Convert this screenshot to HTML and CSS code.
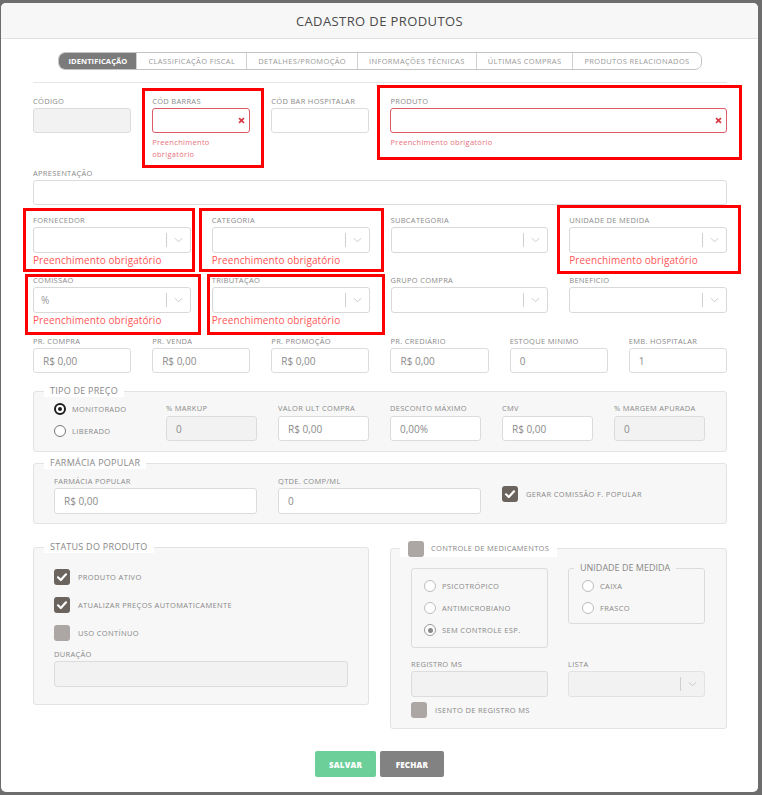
FILE: index.html
```html
<!DOCTYPE html>
<html lang="pt-BR">
<head>
<meta charset="utf-8">
<title>Cadastro de Produtos</title>
<link rel="stylesheet" href="styles.css">
</head>
<body>
<div class="modal">
  <header class="modal-header"><h1 class="title">CADASTRO DE PRODUTOS</h1></header>
  <main class="modal-body">
    <nav class="tabs">
      <span class="tab active">IDENTIFICAÇÃO</span>
      <span class="tab">CLASSIFICAÇÃO FISCAL</span>
      <span class="tab">DETALHES/PROMOÇÃO</span>
      <span class="tab">INFORMAÇÕES TÉCNICAS</span>
      <span class="tab">ÚLTIMAS COMPRAS</span>
      <span class="tab">PRODUTOS RELACIONADOS</span>
    </nav>
    <div class="sep"></div>

    <div class="row grid6 r1">
      <div class="field"><label class="lbl">CÓDIGO</label><div class="input disabled"></div></div>
      <div class="field"><label class="lbl">CÓD BARRAS</label><div class="input invalid"><svg class="xicon" viewBox="0 0 8 8"><path d="M1.2 1.2L6.8 6.8M6.8 1.2L1.2 6.8"/></svg></div><div class="err-sm">Preenchimento obrigatório</div></div>
      <div class="field"><label class="lbl">CÓD BAR HOSPITALAR</label><div class="input"></div></div>
      <div class="field span3"><label class="lbl">PRODUTO</label><div class="input invalid"><svg class="xicon" viewBox="0 0 8 8"><path d="M1.2 1.2L6.8 6.8M6.8 1.2L1.2 6.8"/></svg></div><div class="err-sm">Preenchimento obrigatório</div></div>
    </div>

    <div class="row r2">
      <div class="field"><label class="lbl">APRESENTAÇÃO</label><div class="input"></div></div>
    </div>

    <div class="row grid4 r3">
      <div class="field"><label class="lbl">FORNECEDOR</label><div class="select"><span class="val"></span><span class="bar"></span><svg class="chev" viewBox="0 0 10 6"><path d="M1 1L5 5L9 1"/></svg></div><div class="err-lg">Preenchimento obrigatório</div></div>
      <div class="field"><label class="lbl">CATEGORIA</label><div class="select"><span class="val"></span><span class="bar"></span><svg class="chev" viewBox="0 0 10 6"><path d="M1 1L5 5L9 1"/></svg></div><div class="err-lg">Preenchimento obrigatório</div></div>
      <div class="field"><label class="lbl">SUBCATEGORIA</label><div class="select"><span class="val"></span><span class="bar"></span><svg class="chev" viewBox="0 0 10 6"><path d="M1 1L5 5L9 1"/></svg></div></div>
      <div class="field"><label class="lbl">UNIDADE DE MEDIDA</label><div class="select"><span class="val"></span><span class="bar"></span><svg class="chev" viewBox="0 0 10 6"><path d="M1 1L5 5L9 1"/></svg></div><div class="err-lg">Preenchimento obrigatório</div></div>
    </div>

    <div class="row grid4 r4">
      <div class="field"><label class="lbl">COMISSÃO</label><div class="select"><span class="val">%</span><span class="bar"></span><svg class="chev" viewBox="0 0 10 6"><path d="M1 1L5 5L9 1"/></svg></div><div class="err-lg">Preenchimento obrigatório</div></div>
      <div class="field"><label class="lbl">TRIBUTAÇÃO</label><div class="select"><span class="val"></span><span class="bar"></span><svg class="chev" viewBox="0 0 10 6"><path d="M1 1L5 5L9 1"/></svg></div><div class="err-lg">Preenchimento obrigatório</div></div>
      <div class="field"><label class="lbl">GRUPO COMPRA</label><div class="select"><span class="val"></span><span class="bar"></span><svg class="chev" viewBox="0 0 10 6"><path d="M1 1L5 5L9 1"/></svg></div></div>
      <div class="field"><label class="lbl">BENEFICIO</label><div class="select"><span class="val"></span><span class="bar"></span><svg class="chev" viewBox="0 0 10 6"><path d="M1 1L5 5L9 1"/></svg></div></div>
    </div>

    <div class="row grid6 r5">
      <div class="field"><label class="lbl">PR. COMPRA</label><div class="input">R$ 0,00</div></div>
      <div class="field"><label class="lbl">PR. VENDA</label><div class="input">R$ 0,00</div></div>
      <div class="field"><label class="lbl">PR. PROMOÇÃO</label><div class="input">R$ 0,00</div></div>
      <div class="field"><label class="lbl">PR. CREDIÁRIO</label><div class="input">R$ 0,00</div></div>
      <div class="field"><label class="lbl">ESTOQUE MINIMO</label><div class="input">0</div></div>
      <div class="field"><label class="lbl">EMB. HOSPITALAR</label><div class="input">1</div></div>
    </div>

    <fieldset class="group g-preco">
      <legend class="lgd">TIPO DE PREÇO</legend>
      <div class="gbody grid-in">
        <div class="radios">
          <div class="radio-item"><span class="radio on-dark"></span><span class="opt">MONITORADO</span></div>
          <div class="radio-item"><span class="radio dark"></span><span class="opt">LIBERADO</span></div>
        </div>
        <div class="field"><label class="lbl">% MARKUP</label><div class="input disabled">0</div></div>
        <div class="field"><label class="lbl">VALOR ULT COMPRA</label><div class="input">R$ 0,00</div></div>
        <div class="field"><label class="lbl">DESCONTO MÁXIMO</label><div class="input">0,00%</div></div>
        <div class="field"><label class="lbl">CMV</label><div class="input">R$ 0,00</div></div>
        <div class="field"><label class="lbl">% MARGEM APURADA</label><div class="input disabled">0</div></div>
      </div>
    </fieldset>

    <fieldset class="group g-farm">
      <legend class="lgd">FARMÁCIA POPULAR</legend>
      <div class="gbody grid-in">
        <div class="field span2"><label class="lbl">FARMÁCIA POPULAR</label><div class="input">R$ 0,00</div></div>
        <div class="field span2"><label class="lbl">QTDE. COMP/ML</label><div class="input">0</div></div>
        <div class="check-item farm-check span2"><span class="cbox on"><svg viewBox="0 0 16 16"><path d="M4 8.3L6.8 11L12 5.3"/></svg></span><span class="opt">GERAR COMISSÃO F. POPULAR</span></div>
      </div>
    </fieldset>

    <div class="bottom-row">
      <fieldset class="group g-status">
        <legend class="lgd">STATUS DO PRODUTO</legend>
        <div class="gbody status-body">
          <div class="check-item"><span class="cbox on"><svg viewBox="0 0 16 16"><path d="M4 8.3L6.8 11L12 5.3"/></svg></span><span class="opt">PRODUTO ATIVO</span></div>
          <div class="check-item"><span class="cbox on"><svg viewBox="0 0 16 16"><path d="M4 8.3L6.8 11L12 5.3"/></svg></span><span class="opt">ATUALIZAR PREÇOS AUTOMATICAMENTE</span></div>
          <div class="check-item"><span class="cbox"></span><span class="opt">USO CONTÍNUO</span></div>
          <div class="field duracao"><label class="lbl">DURAÇÃO</label><div class="input disabled tall"></div></div>
        </div>
      </fieldset>

      <fieldset class="group g-ctrl">
        <legend class="lgd lgd-check"><span class="cbox"></span><span>CONTROLE DE MEDICAMENTOS</span></legend>
        <div class="gbody ctrl-body">
          <div class="ctrl-top">
            <div class="sub sub-plain">
              <div class="radio-item"><span class="radio"></span><span class="opt">PSICOTRÓPICO</span></div>
              <div class="radio-item"><span class="radio"></span><span class="opt">ANTIMICROBIANO</span></div>
              <div class="radio-item"><span class="radio on"></span><span class="opt">SEM CONTROLE ESP.</span></div>
            </div>
            <fieldset class="sub sub-fs">
              <legend class="lgd-sub">UNIDADE DE MEDIDA</legend>
              <div class="sub-body">
                <div class="radio-item"><span class="radio"></span><span class="opt">CAIXA</span></div>
                <div class="radio-item"><span class="radio"></span><span class="opt">FRASCO</span></div>
              </div>
            </fieldset>
          </div>
          <div class="ctrl-mid">
            <div class="field"><label class="lbl">REGISTRO MS</label><div class="input disabled tall"></div></div>
            <div class="field"><label class="lbl">LISTA</label><div class="select disabled"><span class="val"></span><span class="bar"></span><svg class="chev" viewBox="0 0 10 6"><path d="M1 1L5 5L9 1"/></svg></div></div>
          </div>
          <div class="check-item isento"><span class="cbox"></span><span class="opt">ISENTO DE REGISTRO MS</span></div>
        </div>
      </fieldset>
    </div>
  </main>
  <footer class="modal-footer">
    <button class="btn btn-save" type="button">SALVAR</button>
    <button class="btn btn-close" type="button">FECHAR</button>
  </footer>
</div>

<div class="ann ann-barras"></div>
<div class="ann ann-produto"></div>
<div class="ann ann-fornecedor"></div>
<div class="ann ann-categoria"></div>
<div class="ann ann-unidade"></div>
<div class="ann ann-comissao"></div>
<div class="ann ann-tributacao"></div>
</body>
</html>
```
FILE: styles.css
```css
* { box-sizing: border-box; }
html { background: #6d6d6d; }
body {
  margin: 0;
  background: #6d6d6d;
  font-family: "Open Sans", "DejaVu Sans", sans-serif;
  color: #888;
  min-height: 795px;
}

.modal {
  margin: 3px 0 0 1px;
  width: 757px;
  background: #fff;
  border-radius: 5px;
  overflow: hidden;
}

.modal-header {
  height: 36px;
  background: #f7f7f7;
  border-bottom: 1px solid #e2e2e2;
  display: flex;
  align-items: center;
  justify-content: center;
}
.title {
  margin: 0;
  font-size: 13px;
  font-weight: 400;
  letter-spacing: 0.4px;
  color: #4a4a4a;
}

.modal-body {
  padding: 0 31px 0 32px;
}

/* tabs */
.tabs {
  margin: 13px auto 0;
  width: fit-content;
  display: flex;
  height: 18px;
  border: 1px solid #c4c4c4;
  border-radius: 7px;
  overflow: hidden;
}
.tab {
  display: flex;
  align-items: center;
  padding: 0 11px;
  font-size: 7.5px;
  letter-spacing: 0.35px;
  color: #999;
  border-left: 1px solid #d0d0d0;
  white-space: nowrap;
}
.tab:first-child { border-left: none; padding: 0 9px; letter-spacing: 0.1px; }
.tab.active {
  background: #7b7b7b;
  color: #fff;
  font-weight: 700;
}

.sep {
  margin-top: 12px;
  height: 1px;
  background: #e6e6e6;
}

/* rows */
.row { margin-top: 8px; }
.r1 { margin-top: 13px; }
.r3 { margin-top: 10px; }
.r5 { margin-top: 9px; }
.grid6 {
  display: grid;
  grid-template-columns: repeat(6, 1fr);
  column-gap: 21px;
  align-items: start;
}
.grid4 {
  display: grid;
  grid-template-columns: repeat(4, 1fr);
  column-gap: 21px;
  align-items: start;
}
.span2 { grid-column: span 2; }
.span3 { grid-column: span 3; }

.field { min-width: 0; }
.lbl {
  display: block;
  font-size: 7.5px;
  line-height: 10px;
  letter-spacing: 0.3px;
  color: #8a8a8a;
  margin-bottom: 2px;
  white-space: nowrap;
}

.input {
  height: 25px;
  border: 1px solid #dcdcdc;
  border-radius: 3px;
  background: #fff;
  display: flex;
  align-items: center;
  padding: 0 9px;
  font-size: 10px;
  color: #8a8a8a;
}
.input.tall { height: 26px; }
.input.disabled { background: #f2f2f2; }
.input.invalid {
  border-color: #dd5a67;
  justify-content: flex-end;
  padding-right: 4px;
}
.xicon {
  width: 7px;
  height: 7px;
  fill: none;
  stroke: #d93a48;
  stroke-width: 2;
}

.select {
  height: 26px;
  border: 1px solid #d9d9d9;
  border-radius: 3px;
  background: #fff;
  display: flex;
  align-items: center;
  font-size: 10px;
  color: #999;
}
.select.disabled { background: #f2f2f2; border-color: #e2e2e2; }
.select .val { flex: 1; padding-left: 7px; }
.select .bar { width: 1px; height: 14px; background: #cfcfcf; }
.chev {
  width: 9px;
  height: 6px;
  margin: 0 7px 0 7px;
  fill: none;
  stroke: #c4c4c4;
  stroke-width: 1;
}

.err-sm {
  margin-top: 3px;
  font-size: 7.5px;
  line-height: 12px;
  letter-spacing: 0.3px;
  color: #e8707c;
}
.err-lg {
  margin-top: 1px;
  font-size: 10px;
  line-height: 13px;
  letter-spacing: 0.1px;
  color: #ff5656;
  white-space: nowrap;
}

/* fieldsets */
.group {
  margin: 12px 0 0;
  padding: 0;
  border: 1px solid #e3e3e3;
  border-radius: 3px;
  background: #f7f7f7;
  min-width: 0;
}
.lgd {
  margin-left: 10px;
  padding: 0 6px;
  background: #fff;
  font-size: 9px;
  line-height: 12px;
  letter-spacing: 0.25px;
  color: #888;
}
.g-farm { margin-top: 5px; }

.grid-in {
  display: grid;
  grid-template-columns: repeat(6, 91px);
  column-gap: 21px;
  align-items: start;
}
.g-preco .gbody { padding: 6px 20px 10px 20px; }
.g-preco .field .lbl { margin-bottom: 3px; }
.g-farm .gbody { padding: 7px 20px 9px 20px; }
.g-farm .input { height: 26px; }

.radios {
  display: flex;
  flex-direction: column;
  gap: 10px;
}
.radio-item {
  display: flex;
  align-items: center;
  height: 12px;
}
.radio {
  width: 12px;
  height: 12px;
  border-radius: 50%;
  border: 1.5px solid #bdbdbd;
  background: #fff;
  margin-right: 6px;
  flex: none;
  display: flex;
  align-items: center;
  justify-content: center;
}
.radio.dark { border: 1.5px solid #777; }
.radio.on-dark { border: 2px solid #1e1e1e; }
.radio.on-dark::after {
  content: "";
  width: 4px;
  height: 4px;
  border-radius: 50%;
  background: #1e1e1e;
}
.radio.on { border-color: #9a9a9a; }
.radio.on::after {
  content: "";
  width: 5px;
  height: 5px;
  border-radius: 50%;
  background: #8a8a8a;
}
.opt {
  font-size: 7.5px;
  letter-spacing: 0.35px;
  color: #888;
  white-space: nowrap;
}

.check-item {
  display: flex;
  align-items: center;
  height: 16px;
}
.cbox {
  width: 16px;
  height: 16px;
  border-radius: 3px;
  background: #aca7a4;
  flex: none;
  margin-right: 8px;
  display: flex;
}
.cbox.on { background: #6b635d; }
.cbox svg {
  width: 16px;
  height: 16px;
  fill: none;
  stroke: #fff;
  stroke-width: 2.2;
  stroke-linecap: round;
  stroke-linejoin: round;
}
.farm-check { margin-top: 10px; }

/* bottom */
.bottom-row {
  margin-top: 16px;
  display: grid;
  grid-template-columns: 336px 1fr;
  column-gap: 21px;
  align-items: start;
}
.bottom-row .group { margin: 0; }
.g-status { margin-top: 1px !important; }
.status-body {
  padding: 16px 20px 17px 20px;
  display: flex;
  flex-direction: column;
  gap: 12px;
}
.duracao { margin-top: -4px; }

.lgd-check {
  display: flex;
  align-items: center;
  margin-left: 9px;
  padding: 0 8px 0 8px;
  line-height: 17px;
  height: 17px;
}
.lgd-check .cbox { margin-right: 7px; }
.lgd-check span:last-child {
  font-size: 7.5px;
  letter-spacing: 0.3px;
}

.ctrl-body { padding: 5px 20px 10px 20px; }
.ctrl-top {
  display: grid;
  grid-template-columns: 137px 137px;
  column-gap: 20px;
  align-items: start;
}
.sub {
  border: 1px solid #dcdcdc;
  border-radius: 3px;
  margin: 0;
  padding: 0;
  min-width: 0;
}
.sub-plain {
  margin-top: 6px;
  padding: 11px 12px 11px 12px;
  display: flex;
  flex-direction: column;
  gap: 10px;
}
.lgd-sub {
  margin-left: 5px;
  padding: 0 6px;
  font-size: 9px;
  line-height: 12px;
  color: #888;
}
.sub-body {
  padding: 6px 13px 9px 13px;
  display: flex;
  flex-direction: column;
  gap: 10px;
}
.ctrl-mid {
  margin-top: 11px;
  display: grid;
  grid-template-columns: 137px 137px;
  column-gap: 20px;
}
.ctrl-mid .select { height: 26px; }
.isento { margin-top: 5px; }

/* footer */
.modal-footer {
  margin-top: 22px;
  padding-bottom: 15px;
  display: flex;
  justify-content: center;
  gap: 4px;
}
.btn {
  height: 26px;
  border: none;
  border-radius: 2px;
  color: #fff;
  font-family: "Open Sans", "DejaVu Sans", sans-serif;
  font-size: 8px;
  font-weight: 800;
  letter-spacing: 0.2px;
  padding: 0;
}
.btn-save { width: 61px; background: #6ccf99; }
.btn-close { width: 64px; background: #828282; }

/* red annotation frames drawn over the screenshot */
.ann {
  position: absolute;
  border: 3px solid #ff0000;
  pointer-events: none;
}
.ann-barras { left: 142px; top: 88px; width: 122px; height: 80px; }
.ann-produto { left: 377px; top: 85px; width: 365px; height: 75px; }
.ann-fornecedor { left: 23px; top: 208px; width: 172px; height: 64px; }
.ann-categoria { left: 199px; top: 208px; width: 185px; height: 64px; }
.ann-unidade { left: 557px; top: 205px; width: 184px; height: 69px; }
.ann-comissao { left: 25px; top: 274px; width: 176px; height: 61px; }
.ann-tributacao { left: 207px; top: 274px; width: 178px; height: 61px; }
```
